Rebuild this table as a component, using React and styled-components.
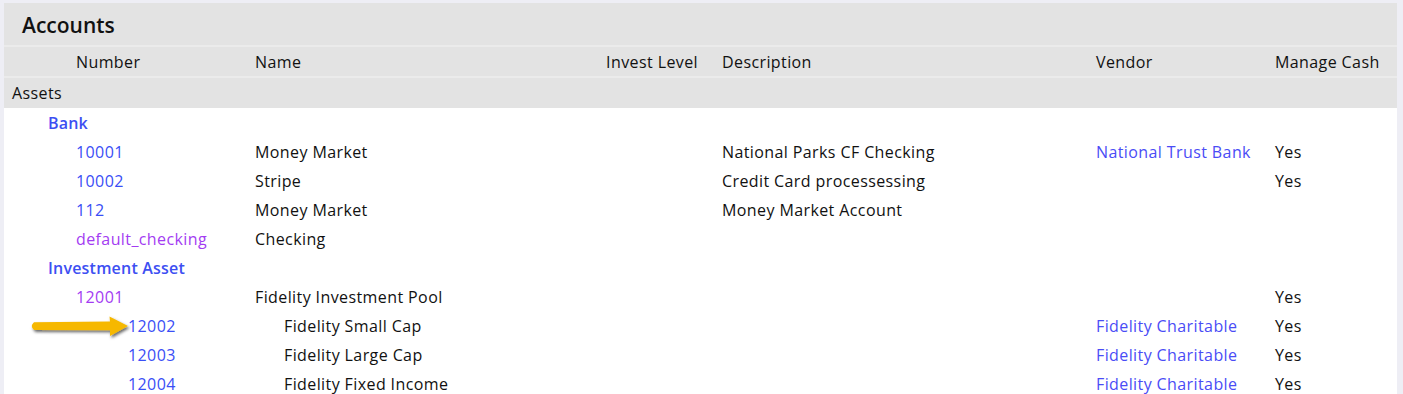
import styled, { createGlobalStyle } from "styled-components";

const GlobalStyle = createGlobalStyle`
  html, body {
    margin: 0;
    padding: 0;
    background: #eeeef5;
  }
  body {
    font-family: "Open Sans", "Noto Sans", "DejaVu Sans", sans-serif;
    font-size: 16px;
    letter-spacing: 0.4px;
    color: #111;
  }
`;

const COLS = "72px 179px 350px 117px 374px 179px 1fr";

const rows = [
  { type: "group", label: "Bank" },
  { num: "10001", name: "Money Market", desc: "National Parks CF Checking", vendor: "National Trust Bank", cash: "Yes" },
  { num: "10002", name: "Stripe", desc: "Credit Card processessing", cash: "Yes" },
  { num: "112", name: "Money Market", desc: "Money Market Account" },
  { num: "default_checking", purple: true, name: "Checking" },
  { type: "group", label: "Investment Asset" },
  { num: "12001", purple: true, name: "Fidelity Investment Pool", cash: "Yes" },
  { num: "12002", depth: 1, name: "Fidelity Small Cap", vendor: "Fidelity Charitable", cash: "Yes", arrow: true },
  { num: "12003", depth: 1, name: "Fidelity Large Cap", vendor: "Fidelity Charitable", cash: "Yes" },
  { num: "12004", depth: 1, name: "Fidelity Fixed Income", vendor: "Fidelity Charitable", cash: "Yes" },
];

function Arrow() {
  return (
    <ArrowWrap width="108" height="30" viewBox="0 0 108 30">
      <defs>
        <filter id="sh" x="-10%" y="-30%" width="130%" height="180%">
          <feDropShadow dx="1.5" dy="2" stdDeviation="1.4" floodColor="#000" floodOpacity="0.6" />
        </filter>
      </defs>
      <g filter="url(#sh)">
        <path d="M8 11.2 L84 10.5 L83.5 5.5 L102 15 L84 25 L84 19.2 L8 19 Q3.5 15 8 11.2 Z" fill="#f6b800" />
      </g>
    </ArrowWrap>
  );
}

export default function App() {
  return (
    <>
      <GlobalStyle />
      <Page>
        <Panel>
          <Title>Accounts</Title>
          <HeadRow>
            <span />
            <HeadCell>Number</HeadCell>
            <HeadCell>Name</HeadCell>
            <HeadCell $right>Invest Level</HeadCell>
            <HeadCell>Description</HeadCell>
            <HeadCell>Vendor</HeadCell>
            <HeadCell>Manage Cash</HeadCell>
          </HeadRow>
          <SectionRow>Assets</SectionRow>
        </Panel>
        <Body>
          {rows.map((r, i) =>
            r.type === "group" ? (
              <GroupRow key={i}>{r.label}</GroupRow>
            ) : (
              <Row key={i}>
                <span />
                <NumCell $depth={r.depth || 0} $purple={r.purple}>
                  {r.arrow && <Arrow />}
                  {r.num}
                </NumCell>
                <NameCell $depth={r.depth || 0}>{r.name}</NameCell>
                <Cell />
                <Cell>{r.desc}</Cell>
                <VendorCell>{r.vendor}</VendorCell>
                <Cell>{r.cash}</Cell>
              </Row>
            )
          )}
        </Body>
      </Page>
    </>
  );
}

const Page = styled.div`
  margin: 3px 6px 0 4px;
  height: 391px;
  overflow: hidden;
  background: #fff;
`;

const Panel = styled.div`
  background: #e3e3e3;
`;

const Title = styled.h1`
  box-sizing: border-box;
  margin: 0;
  height: 44px;
  padding: 1px 0 0 18px;
  display: flex;
  align-items: center;
  font-size: 21px;
  font-weight: 600;
  letter-spacing: 0;
  color: #111;
  border-bottom: 2px solid #ebebeb;
`;

const HeadRow = styled.div`
  display: grid;
  grid-template-columns: ${COLS};
  align-items: center;
  height: 29px;
  border-bottom: 2px solid #ebebeb;
`;

const HeadCell = styled.div`
  white-space: nowrap;
  text-align: ${(p) => (p.$right ? "right" : "left")};
  padding-right: ${(p) => (p.$right ? "24px" : "0")};
`;

const SectionRow = styled.div`
  height: 30px;
  display: flex;
  align-items: center;
  padding-left: 8px;
`;

const Body = styled.div`
  background: #fff;
`;

const GroupRow = styled.div`
  height: 29px;
  display: flex;
  align-items: center;
  padding-left: 44px;
  font-weight: 600;
  letter-spacing: 0.2px;
  color: #3d4ff2;
`;

const Row = styled.div`
  display: grid;
  grid-template-columns: ${COLS};
  align-items: center;
  height: 29px;
`;

const Cell = styled.div`
  white-space: nowrap;
`;

const NumCell = styled(Cell)`
  position: relative;
  padding-left: ${(p) => p.$depth * 52}px;
  color: ${(p) => (p.$purple ? "#a33cf2" : "#3a4ef6")};
`;

const NameCell = styled(Cell)`
  padding-left: ${(p) => p.$depth * 29}px;
`;

const VendorCell = styled(Cell)`
  color: #4a4cf6;
`;

const ArrowWrap = styled.svg`
  position: absolute;
  left: -50px;
  top: 50%;
  transform: translateY(-50%);
`;
